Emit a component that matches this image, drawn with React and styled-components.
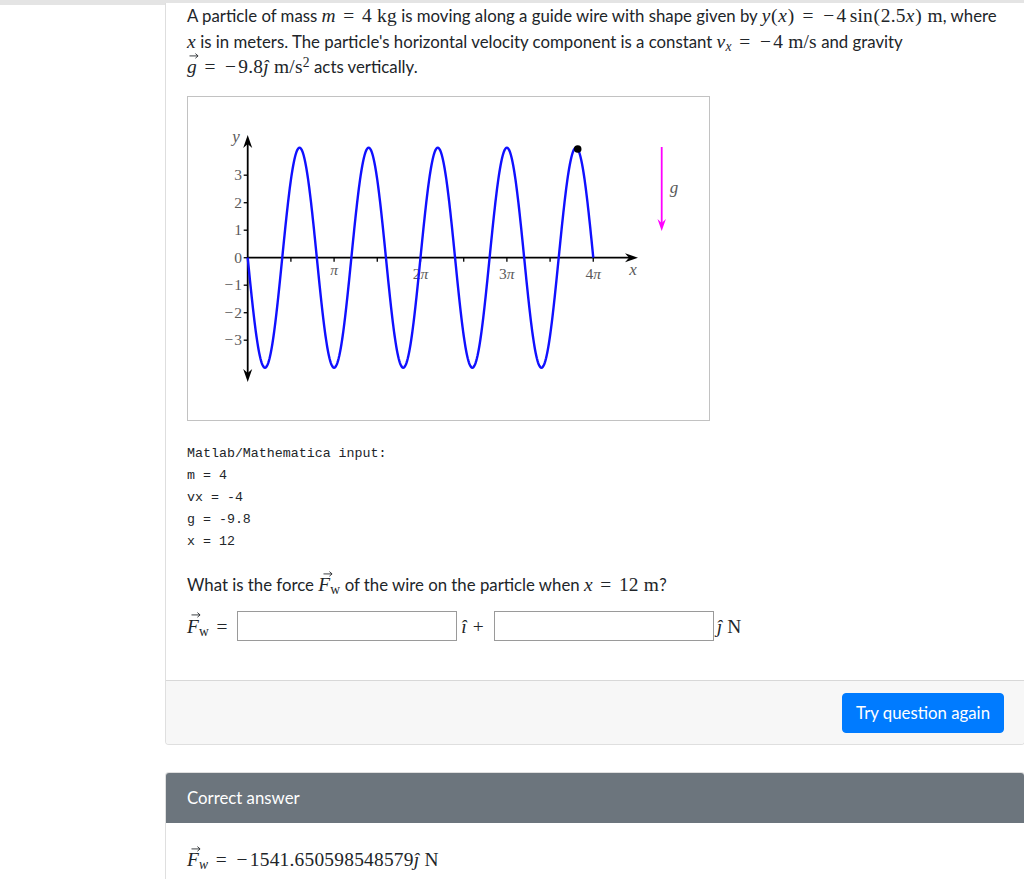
import React from "react";
import styled, { createGlobalStyle } from "styled-components";

const GlobalStyle = createGlobalStyle`
  html, body {
    margin: 0;
    padding: 0;
    overflow-x: hidden;
    background: #fff;
  }
  body {
    font-family: Lato, "Noto Sans", "Liberation Sans", sans-serif;
    font-size: 16.8px;
    color: #212529;
  }
  * {
    box-sizing: border-box;
  }
`;

const TopRule = styled.div`
  height: 5px;
  background: #e4e4e4;
`;

const Page = styled.div`
  padding-left: 165px;
`;

const Card = styled.div`
  width: 860px;
  background: #fff;
  border: 1px solid rgba(0, 0, 0, 0.125);
  border-top: ${(p) => (p.$cut ? "none" : "1px solid rgba(0, 0, 0, 0.125)")};
  border-radius: ${(p) => (p.$cut ? "0 0 4px 4px" : "4px")};
  margin-top: ${(p) => p.$gap || 0}px;
`;

const CardBody = styled.div`
  padding: ${(p) => p.$pad || "0 20px 20px 21px"};
`;

const CardHeader = styled.div`
  background: #6c757d;
  color: #fff;
  padding: 13px 21px;
  line-height: 24px;
  border-radius: 3px 3px 0 0;
`;

const CardFooter = styled.div`
  display: flex;
  justify-content: flex-end;
  padding: 12px 20px 11px;
  background: #f7f7f7;
  border-top: 1px solid rgba(0, 0, 0, 0.125);
  border-radius: 0 0 3px 3px;
`;

const Intro = styled.p`
  margin: -2px 0 16px;
  line-height: 25.6px;
  white-space: nowrap;
`;

const Figure = styled.div`
  width: 523px;
  height: 325px;
  border: 1px solid #c2c2c2;
  background: #fff;
  svg {
    display: block;
  }
`;

const Code = styled.pre`
  margin: 22px 0 0;
  font-family: "Liberation Mono", "DejaVu Sans Mono", monospace;
  font-size: 13.3px;
  line-height: 22px;
  color: #212529;
`;

const Question = styled.p`
  margin: 19px 0 13px;
  line-height: 25.6px;
`;

const AnswerRow = styled.div`
  display: flex;
  align-items: center;
  height: 32px;
  margin-bottom: 18px;
`;

const Blank = styled.input`
  flex: none;
  width: 220px;
  height: 30px;
  margin: 0 ${(p) => p.$right || 2}px 0 ${(p) => p.$left || 4}px;
  border: 1px solid #9a9a9a;
  border-radius: 0;
  font-size: 16px;
  padding: 2px 6px;
`;

const Button = styled.button`
  background: #007bff;
  color: #fff;
  border: 1px solid #007bff;
  border-radius: 4px;
  padding: 7px 13px;
  font-family: inherit;
  font-size: 16.8px;
  line-height: 24px;
  cursor: pointer;
`;

const M = styled.span`
  font-family: "Liberation Serif", "DejaVu Serif", serif;
  font-size: 19.4px;
  line-height: 1;
  letter-spacing: 0.012em;
  white-space: nowrap;
`;

const I = styled.i`
  font-style: italic;
`;

/* relations and binary operators: the math font draws = − + wider than Times */
const Rel = styled.span`
  margin: 0 ${(p) => p.$m || 0.385}em;
`;

const Minus = styled.span`
  margin: 0 0.107em;
`;

const Paren = styled.span`
  margin: 0 0.03em;
`;

const Sub = styled.sub`
  font-size: 0.7em;
  vertical-align: -0.25em;
  line-height: 0;
`;

const Sup = styled.sup`
  font-size: 0.7em;
  vertical-align: 0.45em;
  line-height: 0;
`;

const Sp = styled.span`
  display: inline-block;
  width: 0.1667em;
`;

const VecWrap = styled.span`
  position: relative;
  display: inline-block;
`;

const VecArrow = styled.svg`
  position: absolute;
  top: -0.22em;
  left: ${(p) => p.$left || 0.22}em;
  width: 0.5em;
  height: 0.3em;
  overflow: visible;
`;

const Vec = ({ children, left }) => (
  <VecWrap>
    <I>{children}</I>
    <VecArrow viewBox="0 0 10 6" $left={left}>
      <path
        d="M0.5 3H9.2M6.6 0.6L9.4 3L6.6 5.4"
        stroke="currentColor"
        strokeWidth="0.9"
        fill="none"
      />
    </VecArrow>
  </VecWrap>
);

// plot geometry, in svg coordinates
const S = 27.5;
const X0 = 59.7;
const Y0 = 160.7;

const curvePath = () => {
  const n = 600;
  let d = "";
  for (let i = 0; i <= n; i++) {
    const x = (4 * Math.PI * i) / n;
    const px = X0 + x * S;
    const py = Y0 + 4 * Math.sin(2.5 * x) * S;
    d += (i === 0 ? "M" : "L") + px.toFixed(2) + " " + py.toFixed(2);
  }
  return d;
};

const yTicks = [3, 2, 1, 0, -1, -2, -3];
const xLabels = ["π", "2π", "3π", "4π"];

const Plot = () => {
  const dotX = X0 + 12 * S;
  const dotY = Y0 + 4 * Math.sin(30) * S;
  return (
    <svg width="521" height="323" viewBox="0 0 521 323">
      <g fontFamily="Liberation Serif, DejaVu Serif, serif" fill="#5a5a5a" fontSize="15.5">
        {yTicks.map((v) => (
          <g key={v}>
            <line
              x1={X0 - 4}
              x2={X0}
              y1={Y0 - v * S}
              y2={Y0 - v * S}
              stroke="#111"
              strokeWidth="1.4"
            />
            <text x="54" y={Y0 - v * S + 5} textAnchor="end">
              {v < 0 ? (
                <>
                  <tspan>−</tspan>
                  <tspan dx="1">{Math.abs(v)}</tspan>
                </>
              ) : (
                v
              )}
            </text>
          </g>
        ))}
        {[1, 2, 3, 4, 5, 6, 7, 8].map((k) => (
          <line
            key={k}
            x1={X0 + (k * Math.PI * S) / 2}
            x2={X0 + (k * Math.PI * S) / 2}
            y1={Y0}
            y2={Y0 + 4}
            stroke="#111"
            strokeWidth="1.4"
          />
        ))}
        {xLabels.map((t, k) => (
          <text
            key={t}
            x={X0 + (k + 1) * Math.PI * S}
            y={k === 0 ? Y0 + 17 : Y0 + 21}
            textAnchor="middle"
          >
            {t.length > 1 ? (
              <>
                {t[0]}
                <tspan fontStyle="italic">π</tspan>
              </>
            ) : (
              <tspan fontStyle="italic">π</tspan>
            )}
          </text>
        ))}
        <text x="48" y="45" textAnchor="middle" fontStyle="italic" fontSize="17">
          y
        </text>
        <text x="445" y="178" textAnchor="middle" fontStyle="italic" fontSize="17">
          x
        </text>
        <text x="486" y="96" textAnchor="middle" fontStyle="italic" fontSize="17">
          g
        </text>
      </g>

      <line x1={X0} y1="46" x2={X0} y2="277" stroke="#000" strokeWidth="1.8" />
      <polygon
        points={`${X0},38 ${X0 - 4.5},51 ${X0},47 ${X0 + 4.5},51`}
        fill="#000"
      />
      <polygon
        points={`${X0},285 ${X0 - 4.5},272 ${X0},276 ${X0 + 4.5},272`}
        fill="#000"
      />
      <line x1={X0} y1={Y0} x2="442" y2={Y0} stroke="#000" strokeWidth="1.8" />
      <polygon
        points={`450,${Y0} 437,${Y0 - 4.5} 441,${Y0} 437,${Y0 + 4.5}`}
        fill="#000"
      />

      <path d={curvePath()} fill="none" stroke="#1010ff" strokeWidth="2.4" />
      <circle cx={dotX} cy={dotY} r="3.8" fill="#000" />

      <line x1="473.7" y1="50" x2="473.7" y2="126" stroke="#ff00ff" strokeWidth="1.8" />
      <polygon points="473.7,134 469.5,122 473.7,126 477.9,122" fill="#ff00ff" />
    </svg>
  );
};

const App = () => (
  <>
    <GlobalStyle />
    <TopRule />
    <Page>
      <Card $cut>
        <CardBody>
          <Intro>
            A particle of mass{" "}
            <M>
              <I>m</I>
              <Rel>=</Rel>4 kg
            </M>{" "}
            is moving along a guide wire with shape given by{" "}
            <M>
              <I>y</I>
              <Paren>(</Paren>
              <I>x</I>
              <Paren>)</Paren>
              <Rel>=</Rel>
              <Minus>−</Minus>4<Sp />
              sin<Paren>(</Paren>2.5<I>x</I>
              <Paren>)</Paren> m
            </M>
            , where
            <br />
            <M>
              <I>x</I>
            </M>{" "}
            is in meters. The particle's horizontal velocity component is a constant{" "}
            <M>
              <I>v</I>
              <Sub>
                <I>x</I>
              </Sub>
              <Rel>=</Rel>
              <Minus>−</Minus>4 m/s
            </M>{" "}
            and gravity
            <br />
            <M>
              <Vec left={0.12}>g</Vec>
              <Rel>=</Rel>
              <Minus>−</Minus>9.8<I>ĵ</I> m/s<Sup>2</Sup>
            </M>{" "}
            acts vertically.
          </Intro>

          <Figure>
            <Plot />
          </Figure>

          <Code>
            {"Matlab/Mathematica input:\nm = 4\nvx = -4\ng = -9.8\nx = 12"}
          </Code>

          <Question>
            What is the force{" "}
            <M>
              <Vec>F</Vec>
              <Sub>w</Sub>
            </M>{" "}
            of the wire on the particle when{" "}
            <M>
              <I>x</I>
              <Rel>=</Rel>12 m
            </M>
            ?
          </Question>

          <AnswerRow>
            <M>
              <Vec>F</Vec>
              <Sub>w</Sub>
              <Rel>=</Rel>
            </M>
            <Blank type="text" $left={2} $right={4} />
            <M>
              <I>î</I>
              <Rel $m={0.3}>+</Rel>
            </M>
            <Blank type="text" $left={0} $right={3} />
            <M>
              <I>ĵ</I> N
            </M>
          </AnswerRow>
        </CardBody>
        <CardFooter>
          <Button>Try question again</Button>
        </CardFooter>
      </Card>

      <Card $gap={27}>
        <CardHeader>Correct answer</CardHeader>
        <CardBody $pad="26px 21px 22px">
          <M>
            <Vec>F</Vec>
            <Sub>
              <I>w</I>
            </Sub>
            <Rel>=</Rel>
            <Minus>−</Minus>1541.650598548579<I>ĵ</I> N
          </M>
        </CardBody>
      </Card>
    </Page>
  </>
);

export default App;
